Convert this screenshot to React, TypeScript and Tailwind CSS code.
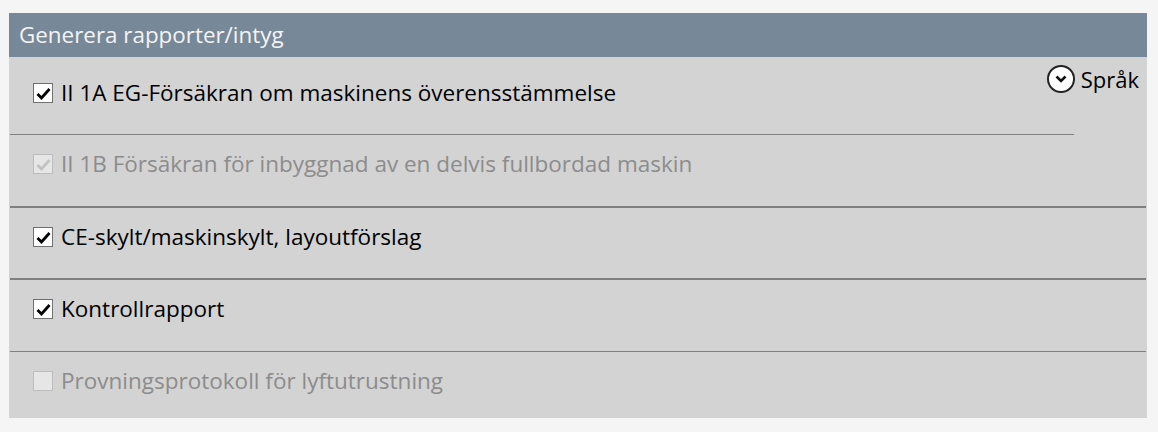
import React from "react";

function CheckBox({ checked, disabled }: { checked: boolean; disabled?: boolean }) {
  return (
    <span
      className={
        "flex h-[20px] w-[20px] shrink-0 items-center justify-center border-[1.5px] " +
        (disabled ? "border-[#bcbcbc] bg-[#e6e6e6]" : "border-[#707070] bg-white")
      }
    >
      {checked && (
        <svg width="15" height="13" viewBox="0 0 15 13">
          <path
            d="M1.5 7 L5.5 11 L13.5 2"
            fill="none"
            stroke={disabled ? "#c2c2c2" : "#000"}
            strokeWidth="2.8"
          />
        </svg>
      )}
    </span>
  );
}

function Item({ label, checked, disabled }: { label: string; checked: boolean; disabled?: boolean }) {
  return (
    <div className="flex h-[22px] items-center gap-[8px] pl-[23px]">
      <CheckBox checked={checked} disabled={disabled} />
      <span className={"whitespace-nowrap text-[22.5px] leading-none " + (disabled ? "text-[#8c8c8c]" : "text-black")}>
        {label}
      </span>
    </div>
  );
}

export default function App() {
  return (
    <div
      className="h-[432px] w-[1158px] bg-[#f5f5f5] pl-[9px] pr-[11px] pt-[13px]"
      style={{ fontFamily: '"Open Sans", "Noto Sans", sans-serif' }}
    >
      <div className="w-[1138px] bg-[#d3d3d3]">
        <div className="flex h-[44px] items-center bg-[#778899] pl-[10px] text-[22.4px] text-[#f4f4f4]">
          Generera rapporter/intyg
        </div>
        <div className="relative">
          <div className="ml-px mr-[73px] h-[78px] border-b border-[#808080] pt-[25px]">
            <Item label="II 1A EG-Försäkran om maskinens överensstämmelse" checked />
          </div>
          <div className="mx-px h-[73px] border-b-2 border-[#808080] pt-[18px]">
            <Item label="II 1B Försäkran för inbyggnad av en delvis fullbordad maskin" checked disabled />
          </div>
          <div className="mx-px h-[72px] border-b-2 border-[#808080] pt-[18px]">
            <Item label="CE-skylt/maskinskylt, layoutförslag" checked />
          </div>
          <div className="mx-px h-[72px] border-b border-[#808080] pt-[18px]">
            <Item label="Kontrollrapport" checked />
          </div>
          <div className="mx-px h-[66px] pt-[18px]">
            <Item label="Provningsprotokoll för lyftutrustning" checked={false} disabled />
          </div>
          <button className="absolute right-[8px] top-[8px] flex items-center gap-[6px] text-[22px] leading-none text-black">
            <span className="flex h-[28px] w-[28px] items-center justify-center rounded-full border-2 border-[#222] bg-white">
              <svg width="12" height="8" viewBox="0 0 12 8">
                <path d="M1.5 1.5 L6 6 L10.5 1.5" fill="none" stroke="#111" strokeWidth="2.6" />
              </svg>
            </span>
            Språk
          </button>
        </div>
      </div>
    </div>
  );
}
